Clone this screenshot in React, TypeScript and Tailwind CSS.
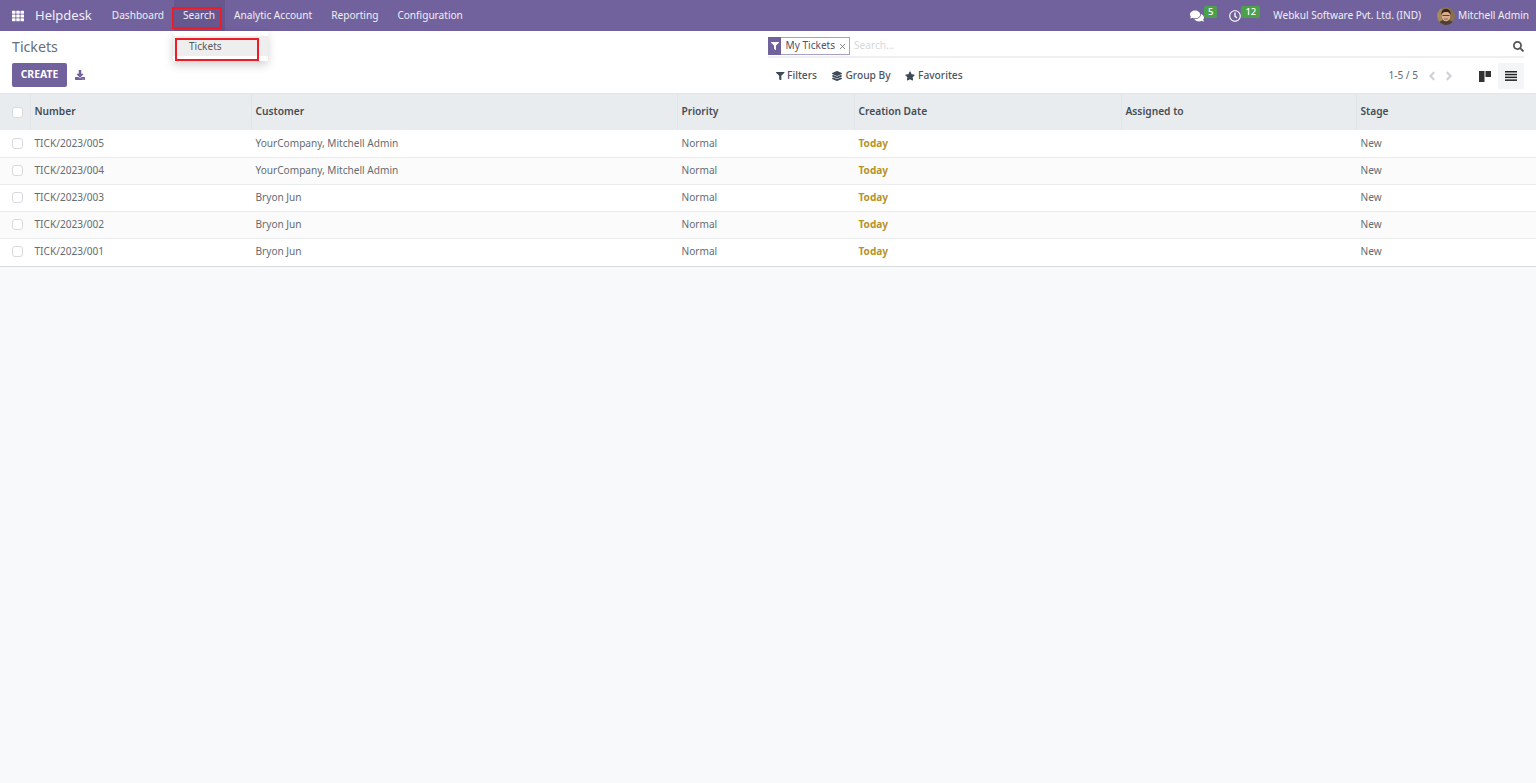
import { FaAngleLeft, FaAngleRight, FaComments, FaDownload, FaFilter, FaLayerGroup, FaRegClock, FaSearch, FaStar, FaTh } from "react-icons/fa";
import { X } from "lucide-react";

const font = "font-['Noto_Sans','Open_Sans',sans-serif]";
const cols = "grid grid-cols-[31px_221px_426px_177px_267px_235px_1fr]";

const tickets = [
  { number: "TICK/2023/005", customer: "YourCompany, Mitchell Admin" },
  { number: "TICK/2023/004", customer: "YourCompany, Mitchell Admin" },
  { number: "TICK/2023/003", customer: "Bryon Jun" },
  { number: "TICK/2023/002", customer: "Bryon Jun" },
  { number: "TICK/2023/001", customer: "Bryon Jun" },
];

const menus = ["Dashboard", "Search", "Analytic Account", "Reporting", "Configuration"];
const headers = ["Number", "Customer", "Priority", "Creation Date", "Assigned to", "Stage"];

function Check() {
  return <span className="block h-[11px] w-[11px] rounded-[3px] border border-[#d8dadd] bg-white" />;
}

function Avatar() {
  return (
    <svg width="18" height="18" viewBox="0 0 18 18" className="rounded-full">
      <rect width="18" height="18" fill="#8a6f4e" />
      <rect width="5" height="18" fill="#a58a5c" />
      <path d="M1 18c1-4 4-5 8-5s7 1 8 5z" fill="#4a4038" />
      <ellipse cx="9" cy="9" rx="4.300" ry="5.300" fill="#d8ac8c" />
      <path d="M4.300 8C4 3.500 6.500 2 9 2s5 1.500 4.700 6c-1-2.500-2.500-3-4.700-3S5.300 5.500 4.300 8z" fill="#33261e" />
      <rect x="5.500" y="8" width="7" height="1" fill="#5a4238" />
      <rect x="7" y="11.500" width="4" height="1" fill="#9a5f50" />
    </svg>
  );
}

function Badge({ children }: { children: string }) {
  return (
    <span className="relative top-[-4px] rounded-[2px] bg-[#4ca04a] px-[4px] text-[9.500px] font-medium leading-[12px] text-white">{children}</span>
  );
}

export default function App() {
  return (
    <div className={`${font} relative flex min-h-[783px] flex-col bg-[#f8f9fb] text-[10.100px] text-[#4c4c4c]`}>
      <header className="flex h-[31px] items-center justify-between bg-[#71619c] pr-[7px] text-white/90">
        <div className="flex h-full items-center">
          <FaTh className="ml-[12px] text-[12px] text-white" />
          <span className="ml-[11px] mr-[10.500px] text-[13px] leading-none">Helpdesk</span>
          {menus.map((m) => (
            <span key={m} className={`flex h-full items-center px-[9.500px] ${m === "Search" ? "bg-[#66578f]" : ""}`}>{m}</span>
          ))}
        </div>
        <div className="flex items-center">
          <FaComments className="text-[14px] text-white" />
          <Badge>5</Badge>
          <FaRegClock className="ml-[12px] text-[12px] text-white" />
          <Badge>12</Badge>
          <span className="ml-[13px]">Webkul Software Pvt. Ltd. (IND)</span>
          <span className="ml-[16px] mr-[3px]"><Avatar /></span>
          <span>Mitchell Admin</span>
        </div>
      </header>

      <section className="flex h-[63px] justify-between border-b border-[#e2e5e8] bg-white px-[12px]">
        <div className="flex w-[756px] flex-col">
          <h1 className="mt-[7px] text-[14.200px] leading-[18px] text-[#666e78]">Tickets</h1>
          <div className="mt-[7px] flex items-center">
            <button className="h-[24px] w-[55px] rounded-[2px] bg-[#71619c] text-[10.400px] font-bold text-white">CREATE</button>
            <FaDownload className="ml-[8px] text-[10px] text-[#71619c]" />
          </div>
        </div>
        <div className="flex flex-1 flex-col">
          <div className="mt-[5px] flex h-[22px] items-center justify-between border-b-2 border-[#eff0f2]">
            <div className="flex items-center">
              <span className="flex h-[18px] w-[13px] items-center justify-center bg-[#71619c]"><FaFilter className="text-[8px] text-white" /></span>
              <span className="flex h-[18px] items-center gap-[3px] border border-l-0 border-[#a79fc4] pl-[4.500px] pr-[2px] text-[#55505f]">
                My Tickets <X size={9} strokeWidth={2} className="text-[#666]" />
              </span>
              <span className="ml-[4px] text-[#d6d8db]">Search...</span>
            </div>
            <FaSearch className="text-[11px] text-[#555]" />
          </div>
          <div className="mt-[5px] flex items-center justify-between">
            <div className="flex items-center pl-[8px] text-[10.200px] font-medium text-[#4a5560]">
              <FaFilter className="mr-[2.500px] text-[8.500px] text-[#3e4a58]" />Filters
              <FaLayerGroup className="ml-[15.500px] mr-[3px] text-[10px] text-[#3e4a58]" />Group By
              <FaStar className="ml-[14.500px] mr-[3px] text-[10px] text-[#3e4a58]" />Favorites
            </div>
            <div className="flex items-center">
              <span className="text-[#5f6a75]">1-5 / 5</span>
              <FaAngleLeft className="ml-[7px] text-[14px] text-[#ced1d5]" />
              <FaAngleRight className="ml-[3px] text-[14px] text-[#ced1d5]" />
              <svg width="12" height="11" viewBox="0 0 12 11" className="ml-[23px]">
                <rect x="0" y="0" width="5.500" height="11" fill="#333" />
                <rect x="6.500" y="0" width="5.500" height="6" fill="#333" />
              </svg>
              <span className="ml-[7px] flex h-[26px] w-[26px] items-center justify-center bg-[#f4f5f6]">
                <svg width="12" height="10" viewBox="0 0 12 10">
                  <rect y="0" width="12" height="1.500" fill="#222" />
                  <rect y="2.800" width="12" height="1.500" fill="#222" />
                  <rect y="5.600" width="12" height="1.500" fill="#222" />
                  <rect y="8.400" width="12" height="1.500" fill="#222" />
                </svg>
              </span>
            </div>
          </div>
        </div>
      </section>

      <div className={`${cols} h-[36px] items-center bg-[#e9ecef] text-[10.200px] font-semibold text-[#454c55]`}>
        <div className="flex h-full items-center border-r border-[#e2e5e8] pl-[12px]"><Check /></div>
        {headers.map((h, i) => (
          <div key={h} className={`flex h-full items-center pl-[3.500px] ${i < 5 ? "border-r border-[#e2e5e8]" : ""}`}>{h}</div>
        ))}
      </div>

      <div className="border-b border-[#d9dcdf] bg-white pb-[1px]">
        {tickets.map((t, i) => (
          <div key={t.number} className={`${cols} h-[27px] items-center border-t pb-[1px] text-[#666b70] ${i ? "border-[#e9ebed]" : "border-white"} ${i % 2 ? "bg-[#fbfbfb]" : "bg-white"}`}>
            <div className="pl-[12px]"><Check /></div>
            <div className="pl-[3.500px]">{t.number}</div>
            <div className="pl-[3.500px]">{t.customer}</div>
            <div className="pl-[3.500px]">Normal</div>
            <div className="pl-[3.500px] font-bold text-[#b8922a]">Today</div>
            <div />
            <div className="pl-[3.500px]">New</div>
          </div>
        ))}
      </div>

      {/* menu that is open under Search, with the red marks drawn on the screenshot */}
      <div className="absolute left-[173px] top-[31px] h-[30px] w-[95px] bg-white pt-[5px] shadow-[0_4px_10px_rgba(0,0,0,0.18)]">
        <div className="h-[20px] bg-[#eeeeee] pl-[16px] leading-[20px] text-[#5a5a5a]">Tickets</div>
      </div>
      <div className="absolute left-[172px] top-[7px] h-[22px] w-[50px] border-[2px] border-[#ee1c25]" />
      <div className="absolute left-[175px] top-[38px] h-[23px] w-[84px] border-[2px] border-[#ee1c25]" />
    </div>
  );
}
